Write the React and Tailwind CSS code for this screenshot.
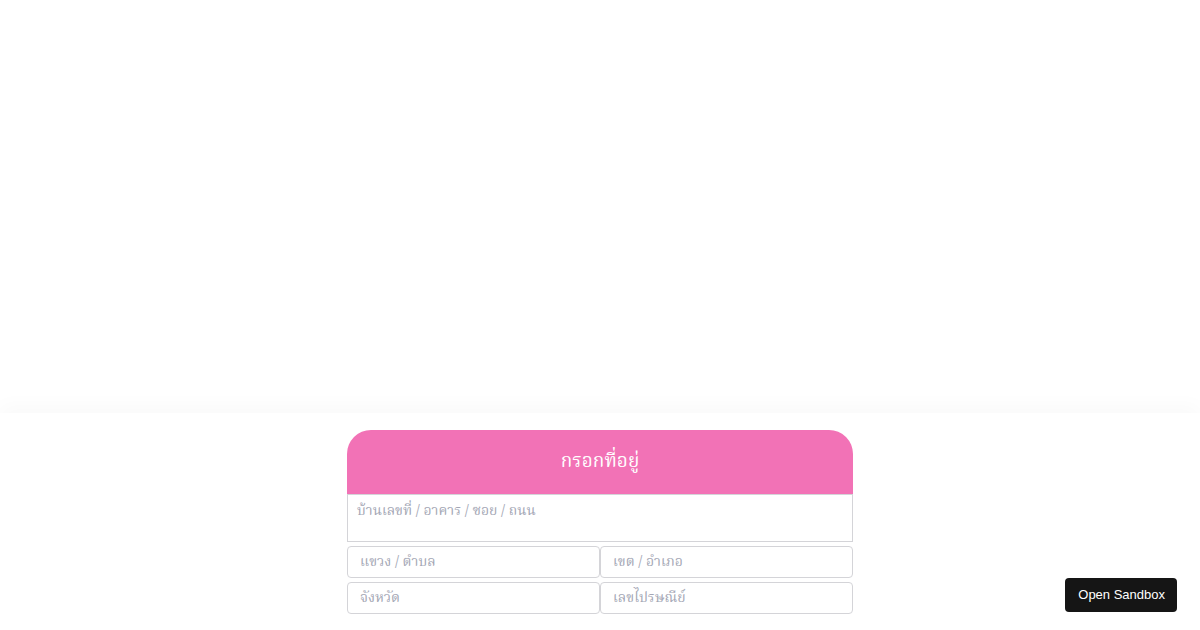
import React from "react";

const fieldClass = "h-8 border border-[#d4d4d8] rounded-[4px] px-3 text-[14px] outline-none placeholder:text-[#a3a6b4]";

const AddressForm = () => {
    return (
        <div className="w-[506px] mx-auto">
            <div className="h-16 bg-[#f272b6] rounded-t-[24px] flex items-center justify-center">
                <h1 className="text-white text-[19px]">กรอกที่อยู่</h1>
            </div>
            <textarea
                placeholder="บ้านเลขที่ / อาคาร / ซอย / ถนน"
                className="block w-full h-12 border border-[#d4d4d8] px-[9px] py-[6px] text-[14px] resize-none outline-none placeholder:text-[#a3a6b4]"
            />
            <div className="grid grid-cols-2 mt-1 gap-y-1">
                <input placeholder="แขวง / ตำบล" className={fieldClass} />
                <input placeholder="เขต / อำเภอ" className={fieldClass} />
                <input placeholder="จังหวัด" className={fieldClass} />
                <input placeholder="เลขไปรษณีย์" className={fieldClass} />
            </div>
        </div>
    );
};

export default function App() {
    return (
        <div className="h-[630px] bg-white flex flex-col font-['Noto_Serif_Thai','Liberation_Serif',serif] relative">
            <div className="flex-1" />
            <div className="h-[217px] bg-white shadow-[0_-8px_18px_rgba(0,0,0,0.025)] pt-[17px]">
                <AddressForm />
            </div>
            <button className="absolute right-[23px] bottom-[18px] h-[34px] pl-[13px] pr-[12px] bg-[#151515] text-white text-[13px] rounded-[4px] font-['Liberation_Sans',sans-serif]">
                Open Sandbox
            </button>
        </div>
    );
}
